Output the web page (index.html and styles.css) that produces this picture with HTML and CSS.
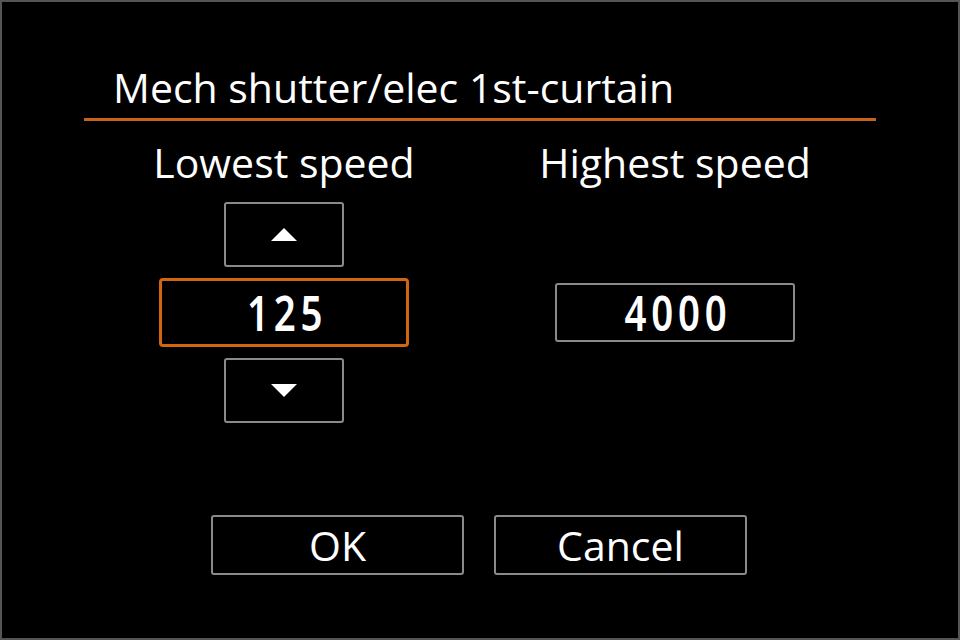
FILE: index.html
```html
<!DOCTYPE html>
<html>
<head>
<meta charset="utf-8">
<link rel="stylesheet" href="styles.css">
</head>
<body>
<div class="screen">
  <div class="header"><span class="title">Mech shutter/elec 1st-curtain</span></div>
  <div class="grid">
    <div class="label lc">Lowest speed</div>
    <div class="label rc">Highest speed</div>
    <div class="step lc up"><svg width="26" height="13" viewBox="0 0 26 13"><polygon points="13,0 26,13 0,13" fill="#fff"/></svg></div>
    <div class="value lc sel"><span class="num">125</span></div>
    <div class="value rc plain"><span class="num">4000</span></div>
    <div class="step lc down"><svg width="26" height="13" viewBox="0 0 26 13"><polygon points="0,0 26,0 13,13" fill="#fff"/></svg></div>
  </div>
  <div class="buttons">
    <div class="btn">OK</div>
    <div class="btn">Cancel</div>
  </div>
</div>
</body>
</html>
```
FILE: styles.css
```css
html, body { margin: 0; padding: 0; background: #000; }
.screen {
  width: 960px; height: 640px; box-sizing: border-box;
  border: 2px solid #555; background: #000; color: #fff;
  font-family: "Open Sans", "Noto Sans", sans-serif;
  overflow: hidden;
}
.header {
  margin: 0 82px 0 82px;
  padding: 0 0 0 29px;
  height: 116px;
  border-bottom: 3px solid #c7631f;
  box-sizing: content-box;
  display: flex; align-items: flex-end;
}
.title { font-size: 41px; line-height: 1; padding-bottom: 10px; }
.grid {
  display: grid;
  grid-template-columns: 400px 382px;
  margin-left: 82px;
  grid-template-rows: auto 65px 69px 65px;
  row-gap: 11px;
}
.lc { grid-column: 1; justify-self: center; }
.rc { grid-column: 2; justify-self: center; }
.label { grid-row: 1; font-size: 41px; line-height: 1; padding-top: 21px; margin-bottom: 8px; }
.step {
  width: 120px; height: 65px; box-sizing: border-box;
  border: 2px solid #8a8a8a; border-radius: 3px;
  display: flex; align-items: center; justify-content: center;
}
.up { grid-row: 2; }
.down { grid-row: 4; }
.value {
  grid-row: 3; align-self: center; box-sizing: border-box;
  display: flex; align-items: center; justify-content: center;
}
.num {
  display: inline-block;
  font-family: "Noto Sans", "Open Sans", sans-serif;
  font-weight: 600; font-size: 48px; line-height: 1; letter-spacing: 6px;
  transform: scaleX(0.8); margin-right: -6px;
}
.sel { width: 250px; height: 69px; border: 3px solid #d2650f; border-radius: 4px; }
.plain { width: 240px; height: 59px; border: 2px solid #8a8a8a; border-radius: 3px; }
.buttons {
  display: flex; justify-content: center; gap: 30px;
  margin-top: 92px; margin-left: -2px;
}
.btn {
  width: 253px; height: 60px; box-sizing: border-box;
  border: 2px solid #8a8a8a; border-radius: 3px;
  display: flex; align-items: center; justify-content: center;
  font-size: 41px;
}
```
